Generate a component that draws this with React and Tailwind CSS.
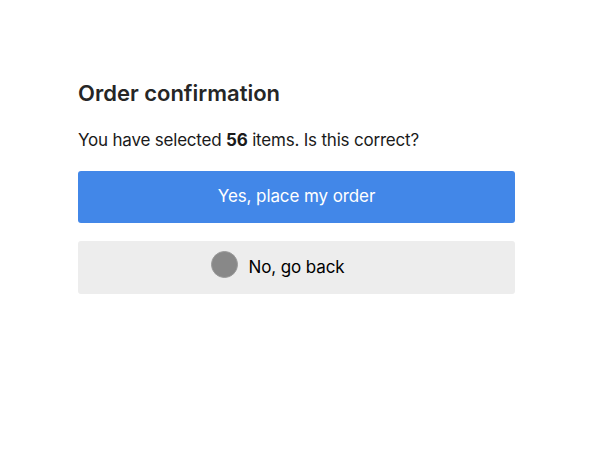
export default function App() {
  return (
    <div className="w-[600px] h-[465px] bg-white text-[#222]" style={{ fontFamily: 'Inter, "Noto Sans", sans-serif' }}>
      <div className="w-[437px] ml-[78px] pt-[78px] flex flex-col">
        <h1 className="text-[22px] leading-[30px] font-semibold text-[#262626]">Order confirmation</h1>
        <p className="mt-[20px] text-[17px] leading-[24px] tracking-[-0.2px] text-[#1a1a1a]">
          You have selected <span className="font-bold">56</span> items. Is this correct?
        </p>
        <button className="mt-[19px] h-[52px] w-full rounded-[3px] bg-[#4287e8] text-white text-[17px] tracking-[-0.1px] flex items-center justify-center">
          Yes, place my order
        </button>
        <button className="mt-[18px] h-[53px] w-full rounded-[3px] bg-[#ededed] text-black text-[17px] tracking-[-0.1px] flex items-center justify-center">
          <span className="relative">
            <span className="absolute left-[-37px] top-[-4px] w-[27px] h-[27px] rounded-full bg-[#888888] border border-[#9a9a9a]"></span>
            No, go back
          </span>
        </button>
      </div>
    </div>
  );
}
